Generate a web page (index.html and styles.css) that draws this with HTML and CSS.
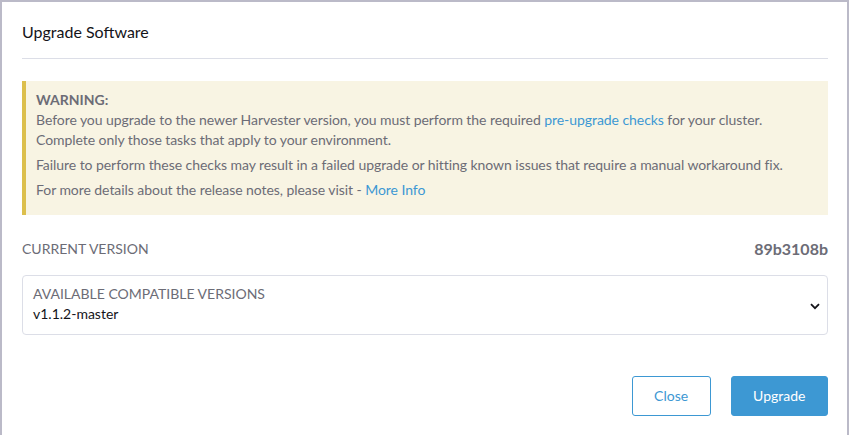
FILE: index.html
```html
<!DOCTYPE html>
<html lang="en">
<head>
<meta charset="utf-8">
<title>Upgrade Software</title>
<link rel="stylesheet" href="styles.css">
</head>
<body>
<div class="modal">
  <div class="header">Upgrade Software</div>
  <div class="banner">
    <div class="banner-title">WARNING:</div>
    <p>Before you upgrade to the newer Harvester version, you must perform the required <a href="#">pre-upgrade checks</a> for your cluster. Complete only those tasks that apply to your environment.</p>
    <p>Failure to perform these checks may result in a failed upgrade or hitting known issues that require a manual workaround fix.</p>
    <p>For more details about the release notes, please visit - <a href="#">More Info</a></p>
  </div>
  <div class="version-row">
    <span class="version-label">CURRENT VERSION</span>
    <span class="version-value">89b3108b</span>
  </div>
  <div class="select">
    <div class="select-text">
      <div class="select-label">AVAILABLE COMPATIBLE VERSIONS</div>
      <div class="select-value">v1.1.2-master</div>
    </div>
    <svg class="chevron" width="10" height="7" viewBox="0 0 10 7"><path d="M1 1.2 L5 5.2 L9 1.2" fill="none" stroke="#141419" stroke-width="1.8"/></svg>
  </div>
  <div class="footer">
    <button class="btn btn-outline">Close</button>
    <button class="btn btn-primary">Upgrade</button>
  </div>
</div>
</body>
</html>
```
FILE: styles.css
```css
html, body {
  margin: 0;
  padding: 0;
  background: #ffffff;
  font-family: Lato, "Liberation Sans", sans-serif;
  font-size: 14px;
  color: #6c6c76;
}
.modal {
  box-sizing: border-box;
  width: 849px;
  height: 440px;
  border: 2px solid #bbbac8;
  border-bottom: none;
  padding: 0 19px 0 20px;
  background: #fff;
}
.header {
  font-size: 16px;
  color: #141419;
  line-height: 20px;
  padding: 20px 0 16px;
  border-bottom: 1px solid #dcdee7;
}
.banner {
  margin-top: 22px;
  background: #f8f4e3;
  border-left: 4px solid #dcbf4c;
  padding: 9px 10px 15px;
  line-height: 20px;
  letter-spacing: -0.06px;
}
.banner-title {
  font-weight: bold;
  letter-spacing: 0;
}
.banner p {
  margin: 0 0 5px;
}
.banner p:last-child {
  margin-bottom: 0;
}
.banner a {
  color: #3d98d3;
  text-decoration: none;
}
.version-row {
  display: flex;
  justify-content: space-between;
  align-items: center;
  margin-top: 24px;
  line-height: 20px;
}
.version-value {
  font-weight: bold;
  font-size: 16px;
}
.select {
  margin-top: 16px;
  height: 60px;
  box-sizing: border-box;
  border: 1px solid #dcdee7;
  border-radius: 4px;
  display: flex;
  align-items: center;
  justify-content: space-between;
  padding: 0 7px 0 10px;
}
.select-text {
  margin-top: -2px;
}
.select-label {
  line-height: 20px;
}
.select-value {
  color: #141419;
  line-height: 20px;
}
.chevron {
  display: block;
  margin-top: 2px;
}
.footer {
  display: flex;
  justify-content: flex-end;
  gap: 20px;
  margin-top: 41px;
}
.btn {
  height: 40px;
  box-sizing: border-box;
  padding: 0 21.5px;
  border-radius: 3px;
  font-family: Lato, "Liberation Sans", sans-serif;
  font-size: 14px;
  line-height: 20px;
  cursor: pointer;
}
.btn-outline {
  background: #fff;
  border: 1px solid #3d98d3;
  color: #3d98d3;
}
.btn-primary {
  background: #3d98d3;
  border: 1px solid #3d98d3;
  color: #fff;
}
```
